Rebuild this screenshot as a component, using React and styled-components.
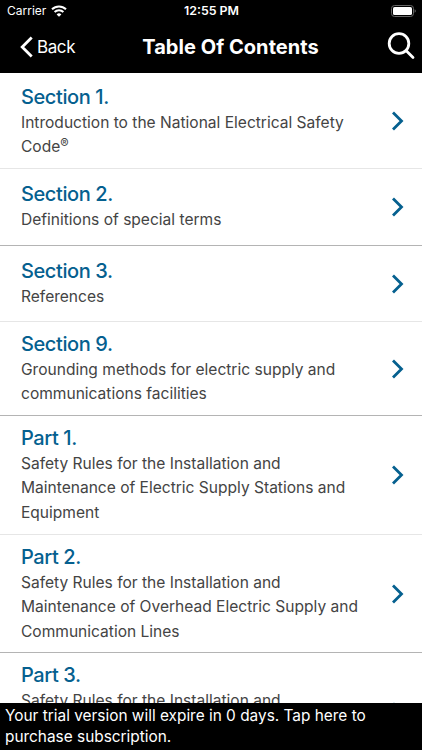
import React from 'react';
import styled, { createGlobalStyle } from 'styled-components';

const Global = createGlobalStyle`
  * { box-sizing: border-box; }
  body { margin: 0; background: #fff; font-family: Inter, "Liberation Sans", sans-serif; }
`;

const Screen = styled.div`
  width: 422px;
  height: 750px;
  display: flex;
  flex-direction: column;
  overflow: hidden;
`;

const StatusBar = styled.div`
  flex: none;
  height: 22px;
  background: #000;
  color: #fff;
  display: grid;
  grid-template-columns: 1fr auto 1fr;
  align-items: center;
  padding: 0 6px 0 7px;
`;

const Carrier = styled.div`
  display: flex;
  align-items: center;
  gap: 5px;
  font-size: 12px;
  line-height: 22px;
`;

const Clock = styled.div`
  font-size: 12.4px;
  font-weight: 600;
  line-height: 22px;
`;

const BatterySlot = styled.div`
  display: flex;
  justify-content: flex-end;
`;

const NavBar = styled.header`
  flex: none;
  height: 51px;
  background: #000;
  color: #fff;
  display: grid;
  grid-template-columns: 110px 1fr 71px;
  align-items: center;
  padding-bottom: 2px;
`;

const Back = styled.div`
  display: flex;
  align-items: center;
  gap: 4px;
  padding-left: 20px;
  font-size: 17px;
  letter-spacing: -0.4px;
`;

const Title = styled.h1`
  margin: 0;
  font-size: 20px;
  font-weight: 700;
  letter-spacing: 0.05px;
  text-align: center;
  white-space: nowrap;
`;

const SearchSlot = styled.div`
  display: flex;
  justify-content: flex-end;
  padding-right: 7px;
  margin-top: -2px;
`;

const List = styled.main`
  flex: 1;
  min-height: 0;
  overflow: hidden;
`;

const Row = styled.section`
  height: ${(p) => p.$height}px;
  padding: ${(p) => p.$top}px 18px 0 21px;
  display: flex;
  justify-content: space-between;
  border-bottom: 1px solid ${(p) => (p.$strong ? '#b4b4b4' : '#e6e6e6')};
`;

const Heading = styled.h2`
  margin: 0 0 1px;
  font-size: 20px;
  font-weight: 500;
  line-height: 25px;
  letter-spacing: -0.4px;
  color: #05608f;
`;

const Description = styled.p`
  margin: 0;
  font-size: 15.55px;
  line-height: 24.4px;
  color: #444;
  white-space: nowrap;

  sup {
    font-size: 12.5px;
    line-height: 0;
    vertical-align: 4px;
  }
`;

const ChevronSlot = styled.div`
  align-self: center;
  margin-top: ${(p) => -p.$offset}px;
  display: flex;
`;

const Banner = styled.footer`
  flex: none;
  height: 47px;
  background: #000;
  color: #fff;
  padding: 3px 5px;
  font-size: 15.4px;
  line-height: 20.5px;
  white-space: nowrap;
`;

const rows = [
  { title: 'Section 1.', lines: ['Introduction to the National Electrical Safety', <>Code<sup>®</sup></>], height: 96, top: 12 },
  { title: 'Section 2.', lines: ['Definitions of special terms'], height: 77, top: 13, strong: true },
  { title: 'Section 3.', lines: ['References'], height: 76, top: 13 },
  { title: 'Section 9.', lines: ['Grounding methods for electric supply and', 'communications facilities'], height: 94, top: 10, strong: true },
  { title: 'Part 1.', lines: ['Safety Rules for the Installation and', 'Maintenance of Electric Supply Stations and', 'Equipment'], height: 119, top: 10 },
  { title: 'Part 2.', lines: ['Safety Rules for the Installation and', 'Maintenance of Overhead Electric Supply and', 'Communication Lines'], height: 118, top: 10, strong: true },
  { title: 'Part 3.', lines: ['Safety Rules for the Installation and'], height: 118, top: 10 },
];

export default function App() {
  return (
    <Screen>
      <Global />
      <StatusBar>
        <Carrier>
          Carrier
          <svg width="16" height="12" viewBox="0 0 16 12" fill="none" stroke="#fff" strokeWidth="2">
            <path d="M1 4.300a10 10 0 0 1 14 0M3.600 7a6.300 6.300 0 0 1 8.800 0" />
            <path d="M8 11.800 5.600 9.400a3.500 3.500 0 0 1 4.800 0z" fill="#fff" stroke="none" />
          </svg>
        </Carrier>
        <Clock>12:55 PM</Clock>
        <BatterySlot>
          <svg width="25" height="12" viewBox="0 0 25 12">
            <rect x=".5" y=".5" width="22" height="11" rx="3" fill="none" stroke="#666" />
            <rect x="2" y="2" width="19" height="8" rx="1.600" fill="#fff" />
            <path d="M23.600 4.200v3.600q1.200-.5 1.200-1.800t-1.200-1.800" fill="#666" />
          </svg>
        </BatterySlot>
      </StatusBar>
      <NavBar>
        <Back>
          <svg width="13" height="22" viewBox="0 0 13 22" fill="none" stroke="#fff" strokeWidth="2.800">
            <path d="M11.700 1.500 2.200 11l9.500 9.500" />
          </svg>
          Back
        </Back>
        <Title>Table Of Contents</Title>
        <SearchSlot>
          <svg width="28" height="28" viewBox="0 0 28 28" fill="none" stroke="#fff" strokeWidth="2.800">
            <circle cx="12" cy="11.500" r="9.800" />
            <path d="m19 18.500 7 7" strokeLinecap="round" />
          </svg>
        </SearchSlot>
      </NavBar>
      <List>
        {rows.map((row) => (
          <Row key={row.title} $height={row.height} $top={row.top} $strong={row.strong}>
            <div>
              <Heading>{row.title}</Heading>
              {row.lines.map((line, i) => (
                <Description key={i}>{line}</Description>
              ))}
            </div>
            <ChevronSlot $offset={row.top}>
              <svg width="13" height="20" viewBox="0 0 13 20" fill="none" stroke="#05608f" strokeWidth="2.800">
                <path d="m2 1.500 8.500 8.500L2 18.500" />
              </svg>
            </ChevronSlot>
          </Row>
        ))}
      </List>
      <Banner>
        Your trial version will expire in 0 days. Tap here to
        <br />
        purchase subscription.
      </Banner>
    </Screen>
  );
}
